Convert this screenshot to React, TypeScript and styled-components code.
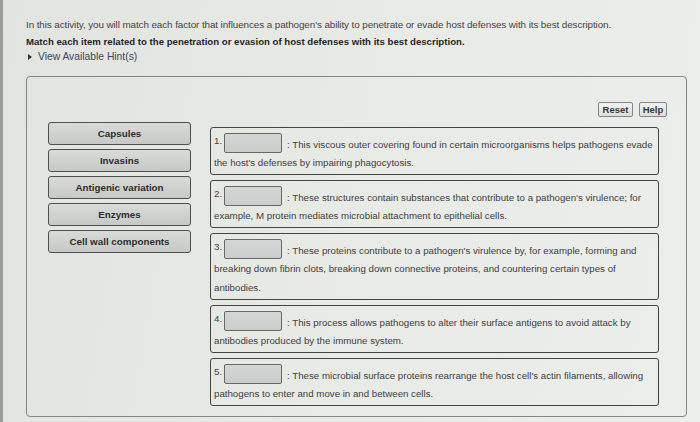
import React from "react";
import styled, { createGlobalStyle } from "styled-components";

const Global = createGlobalStyle`
  html, body { margin: 0; padding: 0; }
  body {
    width: 700px;
    height: 422px;
    overflow: hidden;
    background: #e8eae7;
    font-family: "Liberation Sans", Arial, sans-serif;
  }
`;

const Page = styled.div`
  box-sizing: border-box;
  width: 700px;
  height: 422px;
  border-left: 3px solid #9a9c9a;
  padding: 19px 0 0 23px;
  background: linear-gradient(100deg, #e2e4e0 0%, #e9ebe7 55%, #eceeeb 100%);
`;

const Intro = styled.p`
  margin: 0;
  font-size: 9.9px;
  line-height: 12px;
  color: #444;
  letter-spacing: -0.1px;
`;

const Lead = styled.p`
  margin: 5px 0 0;
  font-size: 9.65px;
  line-height: 12px;
  font-weight: bold;
  color: #262626;
`;

const Hint = styled.div`
  display: flex;
  align-items: center;
  gap: 6px;
  margin: 3px 0 0 2px;
  font-size: 10.3px;
  line-height: 12px;
  color: #3c4660;
`;

const Caret = styled.span`
  width: 0;
  height: 0;
  border-top: 3.5px solid transparent;
  border-bottom: 3.5px solid transparent;
  border-left: 4px solid #333;
`;

const Panel = styled.div`
  box-sizing: border-box;
  width: 661px;
  height: 341px;
  margin-top: 13px;
  border: 1px solid #858785;
  border-radius: 4px;
  padding: 25px 19px 8px 21px;
  display: flex;
  flex-direction: column;
`;

const Toolbar = styled.div`
  display: flex;
  justify-content: flex-end;
  gap: 6px;
`;

const ToolButton = styled.button<{ $w: number }>`
  box-sizing: border-box;
  width: ${(p) => p.$w}px;
  height: 15px;
  padding: 0;
  border: 1px solid #858585;
  border-radius: 2px;
  background: linear-gradient(#f2f3f1, #dcdedb);
  font-family: "Liberation Sans", Arial, sans-serif;
  font-size: 9.5px;
  font-weight: bold;
  color: #383838;
`;

const Board = styled.div`
  display: grid;
  grid-template-columns: 143px 449px;
  column-gap: 19px;
  margin-top: 5px;
  align-items: start;
`;

const Bank = styled.div`
  display: flex;
  flex-direction: column;
  gap: 4px;
`;

const Chip = styled.div`
  box-sizing: border-box;
  height: 23px;
  border: 1.5px solid #4e504e;
  border-radius: 3px;
  background: linear-gradient(#d9dbd8, #c6c9c5);
  display: flex;
  align-items: center;
  justify-content: center;
  font-size: 9.8px;
  font-weight: bold;
  color: #2e2e2e;
`;

const Targets = styled.div`
  display: flex;
  flex-direction: column;
  gap: 5px;
  margin-top: 5px;
`;

const Target = styled.div`
  box-sizing: border-box;
  border: 1.5px solid #434543;
  border-radius: 3px;
  padding: 5px 6px 2px 3px;
  font-size: 9.7px;
  color: #404040;
`;

const FirstRow = styled.div`
  display: flex;
  align-items: center;
  height: 20px;
  white-space: nowrap;
`;

const Num = styled.span`
  align-self: flex-start;
  margin: 2px 2px 0 0;
  line-height: 12px;
`;

const Slot = styled.span`
  box-sizing: border-box;
  width: 58px;
  height: 20px;
  flex: none;
  border: 1.5px solid #666866;
  border-radius: 2px;
  background: linear-gradient(#d4d7d6, #c9cdcb);
  margin-right: 5px;
`;

const Lead1 = styled.span`
  padding-top: 3px;
`;

const Line = styled.div`
  line-height: 19px;
  white-space: nowrap;
`;

const items = ["Capsules", "Invasins", "Antigenic variation", "Enzymes", "Cell wall components"];

const descriptions: string[][] = [
  [
    "This viscous outer covering found in certain microorganisms helps pathogens evade",
    "the host's defenses by impairing phagocytosis.",
  ],
  [
    "These structures contain substances that contribute to a pathogen's virulence; for",
    "example, M protein mediates microbial attachment to epithelial cells.",
  ],
  [
    "These proteins contribute to a pathogen's virulence by, for example, forming and",
    "breaking down fibrin clots, breaking down connective proteins, and countering certain types of",
    "antibodies.",
  ],
  [
    "This process allows pathogens to alter their surface antigens to avoid attack by",
    "antibodies produced by the immune system.",
  ],
  [
    "These microbial surface proteins rearrange the host cell's actin filaments, allowing",
    "pathogens to enter and move in and between cells.",
  ],
];

export default function App() {
  return (
    <>
      <Global />
      <Page>
        <Intro>
          In this activity, you will match each factor that influences a pathogen's ability to penetrate or evade host defenses with its best description.
        </Intro>
        <Lead>Match each item related to the penetration or evasion of host defenses with its best description.</Lead>
        <Hint>
          <Caret />
          View Available Hint(s)
        </Hint>
        <Panel>
          <Toolbar>
            <ToolButton $w={35}>Reset</ToolButton>
            <ToolButton $w={28}>Help</ToolButton>
          </Toolbar>
          <Board>
            <Bank>
              {items.map((it) => (
                <Chip key={it}>{it}</Chip>
              ))}
            </Bank>
            <Targets>
              {descriptions.map(([first, ...rest], i) => (
                <Target key={i}>
                  <FirstRow>
                    <Num>{i + 1}.</Num>
                    <Slot />
                    <Lead1>: {first}</Lead1>
                  </FirstRow>
                  {rest.map((l) => (
                    <Line key={l}>{l}</Line>
                  ))}
                </Target>
              ))}
            </Targets>
          </Board>
        </Panel>
      </Page>
    </>
  );
}
